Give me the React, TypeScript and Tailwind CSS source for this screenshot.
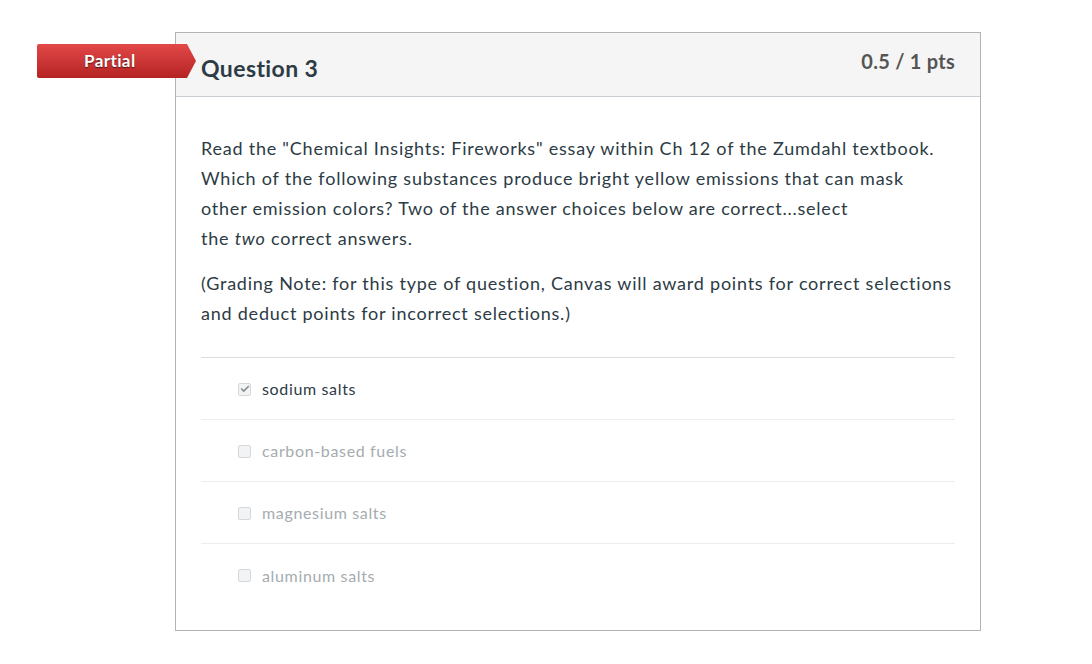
import { Check } from "lucide-react";

const answers = [
    { label: "sodium salts", selected: true },
    { label: "carbon-based fuels", selected: false },
    { label: "magnesium salts", selected: false },
    { label: "aluminum salts", selected: false },
];

export default function App() {
    return (
        <div className="min-h-screen bg-white pt-8 pl-[175px] font-['Lato','Liberation_Sans',sans-serif] [font-variant-ligatures:none]">
            <div className="relative w-[806px] border border-[#b3b3b3] bg-white">
                {/* status badge */}
                <div className="absolute -left-[139px] top-[11px] flex h-[34px] w-[159px] items-center pl-[47px] bg-gradient-to-b from-[#e24848] to-[#b52222] [clip-path:polygon(0_0,150px_0,159px_50%,150px_100%,0_100%)] rounded-l-[2px] shadow">
                    <span className="text-[17px] font-bold tracking-[0.4px] text-white [text-shadow:0_1px_1px_rgba(0,0,0,0.6)]">
                        Partial
                    </span>
                </div>

                {/* header */}
                <div className="flex h-[64px] items-start justify-between border-b border-[#c7cdd1] bg-[#f5f5f5] pl-[25px] pr-[25px]">
                    <h2 className="mt-[24px] text-[23px] font-bold leading-none text-[#2d3b45] tracking-[0.4px]">
                        Question 3
                    </h2>
                    <div className="mt-[18px] text-[20px] font-bold leading-none text-[#555] tracking-[0.25px]">
                        0.5 / 1 pts
                    </div>
                </div>

                {/* body */}
                <div className="px-[25px] pt-[36px] pb-[24px] text-[18px] leading-[30px] tracking-[0.77px] text-[#2d3b45]">
                    <p>
                        Read the "Chemical Insights: Fireworks" essay within Ch 12 of the Zumdahl textbook.
                        <br />
                        Which of the following substances produce bright yellow emissions that can mask
                        <br />
                        other emission colors? Two of the answer choices below are correct...select
                        <br />
                        the <em>two</em> correct answers.
                    </p>
                    <p className="mt-[15px]">
                        (Grading Note: for this type of question, Canvas will award points for correct selections
                        <br />
                        and deduct points for incorrect selections.)
                    </p>

                    <div className="mt-[29px] border-t border-[#dcdfe2]">
                        {answers.map((a, i) => (
                            <div
                                key={a.label}
                                className={`flex h-[62px] items-center pl-[37px] pt-[1px] ${
                                    i < answers.length - 1 ? "border-b border-[#ebedee]" : ""
                                }`}
                            >
                                <span className="flex h-[13px] w-[13px] items-center justify-center rounded-[2px] border border-[#d5d8da] bg-[#f2f3f4]">
                                    {a.selected && (
                                        <Check className="h-[10px] w-[10px] text-[#8a8f93]" strokeWidth={4} />
                                    )}
                                </span>
                                <span
                                    className={`ml-[11px] text-[16px] tracking-[0.65px] ${
                                        a.selected ? "text-[#2d3b45]" : "text-[#a5acb0]"
                                    }`}
                                >
                                    {a.label}
                                </span>
                            </div>
                        ))}
                    </div>
                </div>
            </div>
        </div>
    );
}
